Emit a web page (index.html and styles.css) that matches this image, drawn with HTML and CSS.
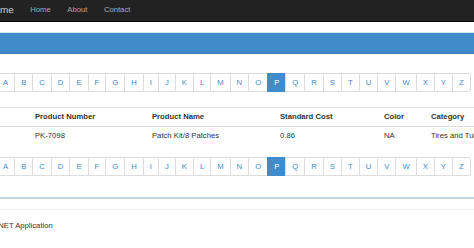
FILE: index.html
```html
<!DOCTYPE html>
<html lang="en">
<head>
  <meta charset="UTF-8" />
  <meta name="viewport" content="width=device-width, initial-scale=1.0"/>
  <title>Products - My ASP.NET Application</title>
  <link rel="stylesheet" href="styles.css">
</head>
<body>
  <div class="navbar">
    <div class="container nav-inner">
      <a class="brand" href="#">Application name</a>
      <ul class="nav">
        <li><a href="#">Home</a></li>
        <li><a href="#">About</a></li>
        <li><a href="#">Contact</a></li>
      </ul>
    </div>
  </div>

  <div class="container body-content">
    <div class="banner"></div>

    <ul class="pagination">
      <li><a href="#">A</a></li><li><a href="#">B</a></li><li><a href="#">C</a></li><li><a href="#">D</a></li><li><a href="#">E</a></li><li><a href="#">F</a></li><li><a href="#">G</a></li><li><a href="#">H</a></li><li><a href="#">I</a></li><li><a href="#">J</a></li><li><a href="#">K</a></li><li><a href="#">L</a></li><li><a href="#">M</a></li><li><a href="#">N</a></li><li><a href="#">O</a></li><li class="active"><a href="#">P</a></li><li><a href="#">Q</a></li><li><a href="#">R</a></li><li><a href="#">S</a></li><li><a href="#">T</a></li><li><a href="#">U</a></li><li><a href="#">V</a></li><li><a href="#">W</a></li><li><a href="#">X</a></li><li><a href="#">Y</a></li><li><a href="#">Z</a></li>
    </ul>

    <table class="table">
      <colgroup>
        <col class="col-first">
        <col class="col-number">
        <col class="col-name">
        <col class="col-cost">
        <col class="col-color">
        <col>
      </colgroup>
      <tr>
        <th></th>
        <th>Product Number</th>
        <th>Product Name</th>
        <th>Standard Cost</th>
        <th>Color</th>
        <th>Category</th>
      </tr>
      <tr>
        <td></td>
        <td>PK-7098</td>
        <td>Patch Kit/8 Patches</td>
        <td>0.86</td>
        <td>NA</td>
        <td>Tires and Tubes</td>
      </tr>
    </table>

    <ul class="pagination pagination-bottom">
      <li><a href="#">A</a></li><li><a href="#">B</a></li><li><a href="#">C</a></li><li><a href="#">D</a></li><li><a href="#">E</a></li><li><a href="#">F</a></li><li><a href="#">G</a></li><li><a href="#">H</a></li><li><a href="#">I</a></li><li><a href="#">J</a></li><li><a href="#">K</a></li><li><a href="#">L</a></li><li><a href="#">M</a></li><li><a href="#">N</a></li><li><a href="#">O</a></li><li class="active"><a href="#">P</a></li><li><a href="#">Q</a></li><li><a href="#">R</a></li><li><a href="#">S</a></li><li><a href="#">T</a></li><li><a href="#">U</a></li><li><a href="#">V</a></li><li><a href="#">W</a></li><li><a href="#">X</a></li><li><a href="#">Y</a></li><li><a href="#">Z</a></li>
    </ul>

    <hr class="rule" />
    <footer>
      <hr />
      <p>&copy; 2024 - My ASP.NET Application</p>
    </footer>
  </div>
</body>
</html>
```

FILE: styles.css
```css
html, body {
  overflow: hidden;
}

body {
  margin: 0;
  padding: 0;
  font-family: "Liberation Sans", Arial, sans-serif;
  font-size: 7.7px;
  line-height: 11px;
  color: #333;
  background: #fff;
}

a {
  text-decoration: none;
}

.container {
  width: 627px;
  margin-left: -62px;
}

/* navbar */
.navbar {
  background: #222;
  border-bottom: 1px solid #080808;
  height: 21px;
}

.nav-inner {
  display: flex;
  align-items: center;
  height: 19px;
}

.brand {
  font-size: 9.9px;
  color: #d2d2d2;
  padding-right: 8.25px;
}

.nav {
  display: flex;
  list-style: none;
  margin: 0;
  padding: 0;
}

.nav a {
  display: block;
  padding: 0 8.25px;
  color: #ababab;
}

/* blue strip */
.banner {
  margin-top: 10px;
  height: 20px;
  background: #428bca;
  border-top: 1px solid #c9ecf6;
  border-bottom: 1px solid #3b7db8;
}

/* pager */
.pagination {
  display: flex;
  list-style: none;
  margin: 19px 0 0 58px;
  padding: 0;
}

.pagination-bottom {
  margin-top: 12px;
}

.pagination li a {
  display: block;
  padding: 3px 6px;
  line-height: 11px;
  color: #428bca;
  background: #fff;
  border: 1px solid #ddd;
  margin-left: -1px;
}

.pagination li:first-child a {
  margin-left: 0;
  border-radius: 2px 0 0 2px;
}

.pagination li:last-child a {
  border-radius: 0 2px 2px 0;
}

.pagination li.active a {
  background: #428bca;
  border-color: #428bca;
  color: #fff;
}

/* table */
.table {
  width: 627px;
  table-layout: fixed;
  border-collapse: collapse;
  margin: 15px 0 0 0;
}

.col-first { width: 92.6px; }
.col-number { width: 117px; }
.col-name { width: 128px; }
.col-cost { width: 104px; }
.col-color { width: 47px; }

.table th,
.table td {
  text-align: left;
  padding: 4px 4.4px;
  line-height: 10px;
  border-top: 1px solid #ddd;
  white-space: nowrap;
  overflow: hidden;
}

.table th {
  font-weight: bold;
}

/* rules and footer */
.rule {
  margin: 21px 0 0 0;
  border: 0;
  border-top: 2px solid #c3d3df;
  width: 700px;
}

footer hr {
  margin: 10px 0 0 0;
  border: 0;
  border-top: 1px solid #eee;
  width: 700px;
}

footer p {
  margin: 10px 0 0 0;
}
```
